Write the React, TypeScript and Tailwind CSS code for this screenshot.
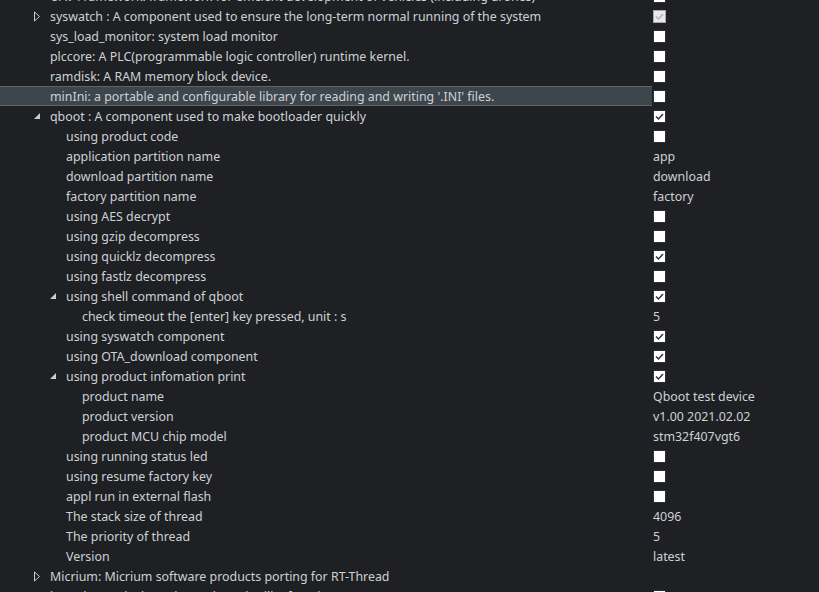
import React from "react";

type Row = {
  label: string;
  depth: 0 | 1 | 2;
  toggle?: "open" | "closed";
  value?: string;
  check?: "on" | "off" | "disabled";
  selected?: boolean;
};

const rows: Row[] = [
  { label: "UAV Framework: framework for efficient development of vehicles (including drones)", depth: 0, check: "off" },
  { label: "syswatch : A component used to ensure the long-term normal running of the system", depth: 0, toggle: "closed", check: "disabled" },
  { label: "sys_load_monitor: system load monitor", depth: 0, check: "off" },
  { label: "plccore: A PLC(programmable logic controller) runtime kernel.", depth: 0, check: "off" },
  { label: "ramdisk: A RAM memory block device.", depth: 0, check: "off" },
  { label: "minIni: a portable and configurable library for reading and writing '.INI' files.", depth: 0, check: "off", selected: true },
  { label: "qboot : A component used to make bootloader quickly", depth: 0, toggle: "open", check: "on" },
  { label: "using product code", depth: 1, check: "off" },
  { label: "application partition name", depth: 1, value: "app" },
  { label: "download partition name", depth: 1, value: "download" },
  { label: "factory partition name", depth: 1, value: "factory" },
  { label: "using AES decrypt", depth: 1, check: "off" },
  { label: "using gzip decompress", depth: 1, check: "off" },
  { label: "using quicklz decompress", depth: 1, check: "on" },
  { label: "using fastlz decompress", depth: 1, check: "off" },
  { label: "using shell command of qboot", depth: 1, toggle: "open", check: "on" },
  { label: "check timeout the [enter] key pressed, unit : s", depth: 2, value: "5" },
  { label: "using syswatch component", depth: 1, check: "on" },
  { label: "using OTA_download component", depth: 1, check: "on" },
  { label: "using product infomation print", depth: 1, toggle: "open", check: "on" },
  { label: "product name", depth: 2, value: "Qboot test device" },
  { label: "product version", depth: 2, value: "v1.00 2021.02.02" },
  { label: "product MCU chip model", depth: 2, value: "stm32f407vgt6" },
  { label: "using running status led", depth: 1, check: "off" },
  { label: "using resume factory key", depth: 1, check: "off" },
  { label: "appl run in external flash", depth: 1, check: "off" },
  { label: "The stack size of thread", depth: 1, value: "4096" },
  { label: "The priority of thread", depth: 1, value: "5" },
  { label: "Version", depth: 1, value: "latest" },
  { label: "Micrium: Micrium software products porting for RT-Thread", depth: 0, toggle: "closed" },
  { label: "kernel_sample: kernel sample and utility functions", depth: 0, check: "off" },
];

const indent = ["pl-[33px]", "pl-[49px]", "pl-[65px]"];

function Toggle({ kind }: { kind?: "open" | "closed" }) {
  return (
    <span className="w-[17px] h-5 flex items-center shrink-0">
      {kind === "closed" && (
        <svg width="8" height="11" viewBox="0 0 8 11">
          <polygon points="1.5,1 6.5,5.5 1.5,10" fill="none" stroke="#c9cdd2" strokeWidth="1" />
        </svg>
      )}
      {kind === "open" && (
        <svg width="8" height="8" viewBox="0 0 8 8" className="mt-[-1px]">
          <polygon points="7,1 7,7 1,7" fill="#c9cdd2" />
        </svg>
      )}
    </span>
  );
}

function CheckBox({ state }: { state: "on" | "off" | "disabled" }) {
  const disabled = state === "disabled";
  return (
    <span
      className={
        disabled
          ? "w-[13px] h-[13px] border border-[#a8a8a8] bg-[#e9e9e9] flex items-center justify-center"
          : "w-[13px] h-[13px] border border-[#2c2f33] bg-white flex items-center justify-center"
      }
    >
      {state !== "off" && (
        <svg width="11" height="11" viewBox="0 0 11 11">
          <polyline
            points="2,5.5 4.5,8 9,3"
            fill="none"
            stroke={disabled ? "#b4b4b4" : "#333333"}
            strokeWidth="1.5"
          />
        </svg>
      )}
    </span>
  );
}

export default function App() {
  return (
    <div
      className="w-[819px] h-[592px] overflow-hidden bg-[#1e2023] text-[#cdd1d6] text-[12.4px]"
      style={{ fontFamily: "'Noto Sans', 'Open Sans', sans-serif" }}
    >
      <div className="flex flex-col -mt-[14px]">
        {rows.map((r, i) => (
          <div key={i} className="flex h-5 items-center">
            <div
              className={
                r.selected
                  ? `w-[652px] h-5 flex items-center shrink-0 bg-[#3e454c] border-y border-[#5b636b] ${indent[r.depth]}`
                  : `w-[652px] h-5 flex items-center shrink-0 ${indent[r.depth]}`
              }
            >
              <Toggle kind={r.toggle} />
              <span className="whitespace-nowrap h-5 leading-[22px]">{r.label}</span>
            </div>
            <div className="flex-1 flex items-center pl-px">
              {r.check && <CheckBox state={r.check} />}
              {r.value && <span className="whitespace-nowrap h-5 leading-[22px]">{r.value}</span>}
            </div>
          </div>
        ))}
      </div>
    </div>
  );
}
